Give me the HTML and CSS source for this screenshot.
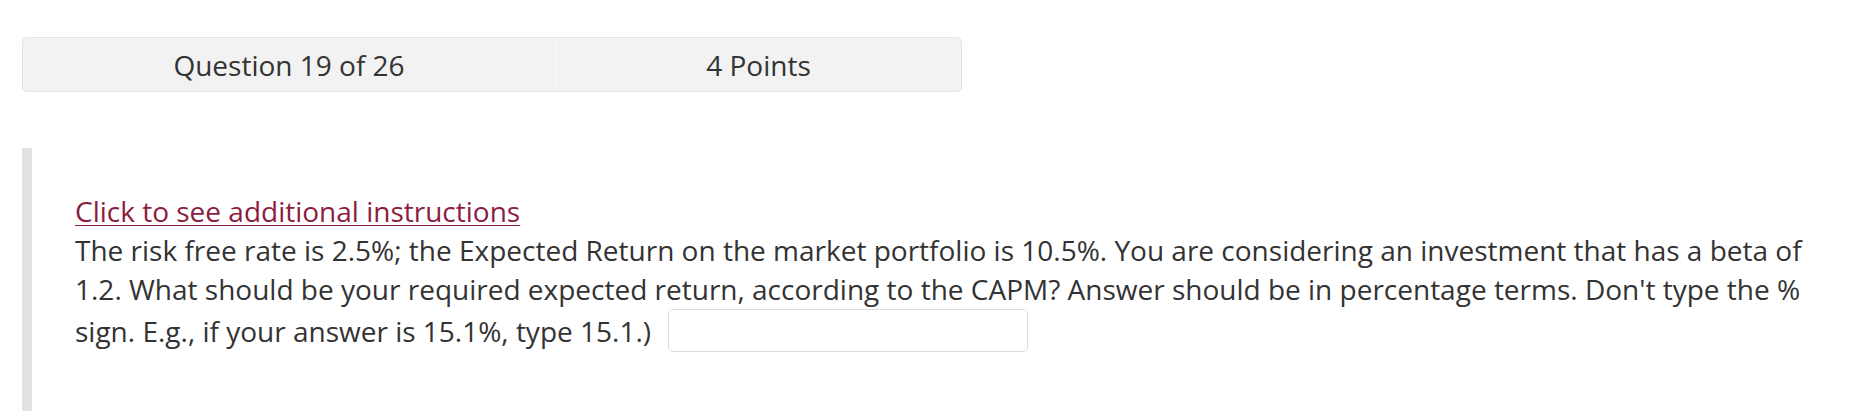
FILE: index.html
```html
<!DOCTYPE html>
<html>
<head>
<meta charset="utf-8">
<link rel="stylesheet" href="styles.css">
</head>
<body>
<div class="page">
  <div class="qheader">
    <div class="qcell">Question 19 of 26</div>
    <div class="qcell">4 Points</div>
  </div>
  <div class="qbody">
    <div class="qcontent">
      <a class="instr" href="#">Click to see additional instructions</a>
      <div class="qtext">The risk free rate is 2.5%; the Expected Return on the market portfolio is 10.5%. You are considering an investment that has a beta of 1.2. What should be your required expected return, according to the CAPM? Answer should be in percentage terms. Don't type the % sign. E.g., if your answer is 15.1%, type 15.1.) <input class="answer" type="text"></div>
    </div>
  </div>
</div>
</body>
</html>
```
FILE: styles.css
```css
html, body {
  margin: 0;
  padding: 0;
  background: #ffffff;
  overflow: hidden;
}
body {
  font-family: "Open Sans", "Liberation Sans", sans-serif;
  color: #333333;
}
.page {
  padding: 37px 0 0 22px;
}
.qheader {
  display: flex;
  width: 938px;
  height: 53px;
  border: 1px solid #e3e3e3;
  border-radius: 5px;
  background: #f2f2f2;
}
.qcell {
  flex: 0 0 auto;
  display: flex;
  align-items: center;
  justify-content: center;
  font-size: 28px;
  color: #333333;
}
.qcell:first-child {
  width: 532px;
  border-right: 1px solid #f8f8f8;
}
.qcell:last-child {
  flex: 1 1 auto;
}
.qbody {
  margin-top: 56px;
  border-left: 10px solid #e1e2e4;
  height: 263px;
  padding-left: 43px;
  padding-right: 40px;
}
.qcontent {
  padding-top: 44px;
  font-size: 28px;
  line-height: 39px;
}
.instr {
  color: #8c1d40;
  text-decoration: underline;
  text-underline-offset: 3px;
  text-decoration-thickness: 1px;
}
.qtext {
  color: #333333;
}
.answer {
  width: 360px;
  height: 43px;
  box-sizing: border-box;
  border: 1px solid #dcdcdc;
  border-radius: 5px;
  margin-left: 10px;
  margin-bottom: 8px;
  vertical-align: middle;
  font-size: 20px;
  padding: 0 8px;
}
```
